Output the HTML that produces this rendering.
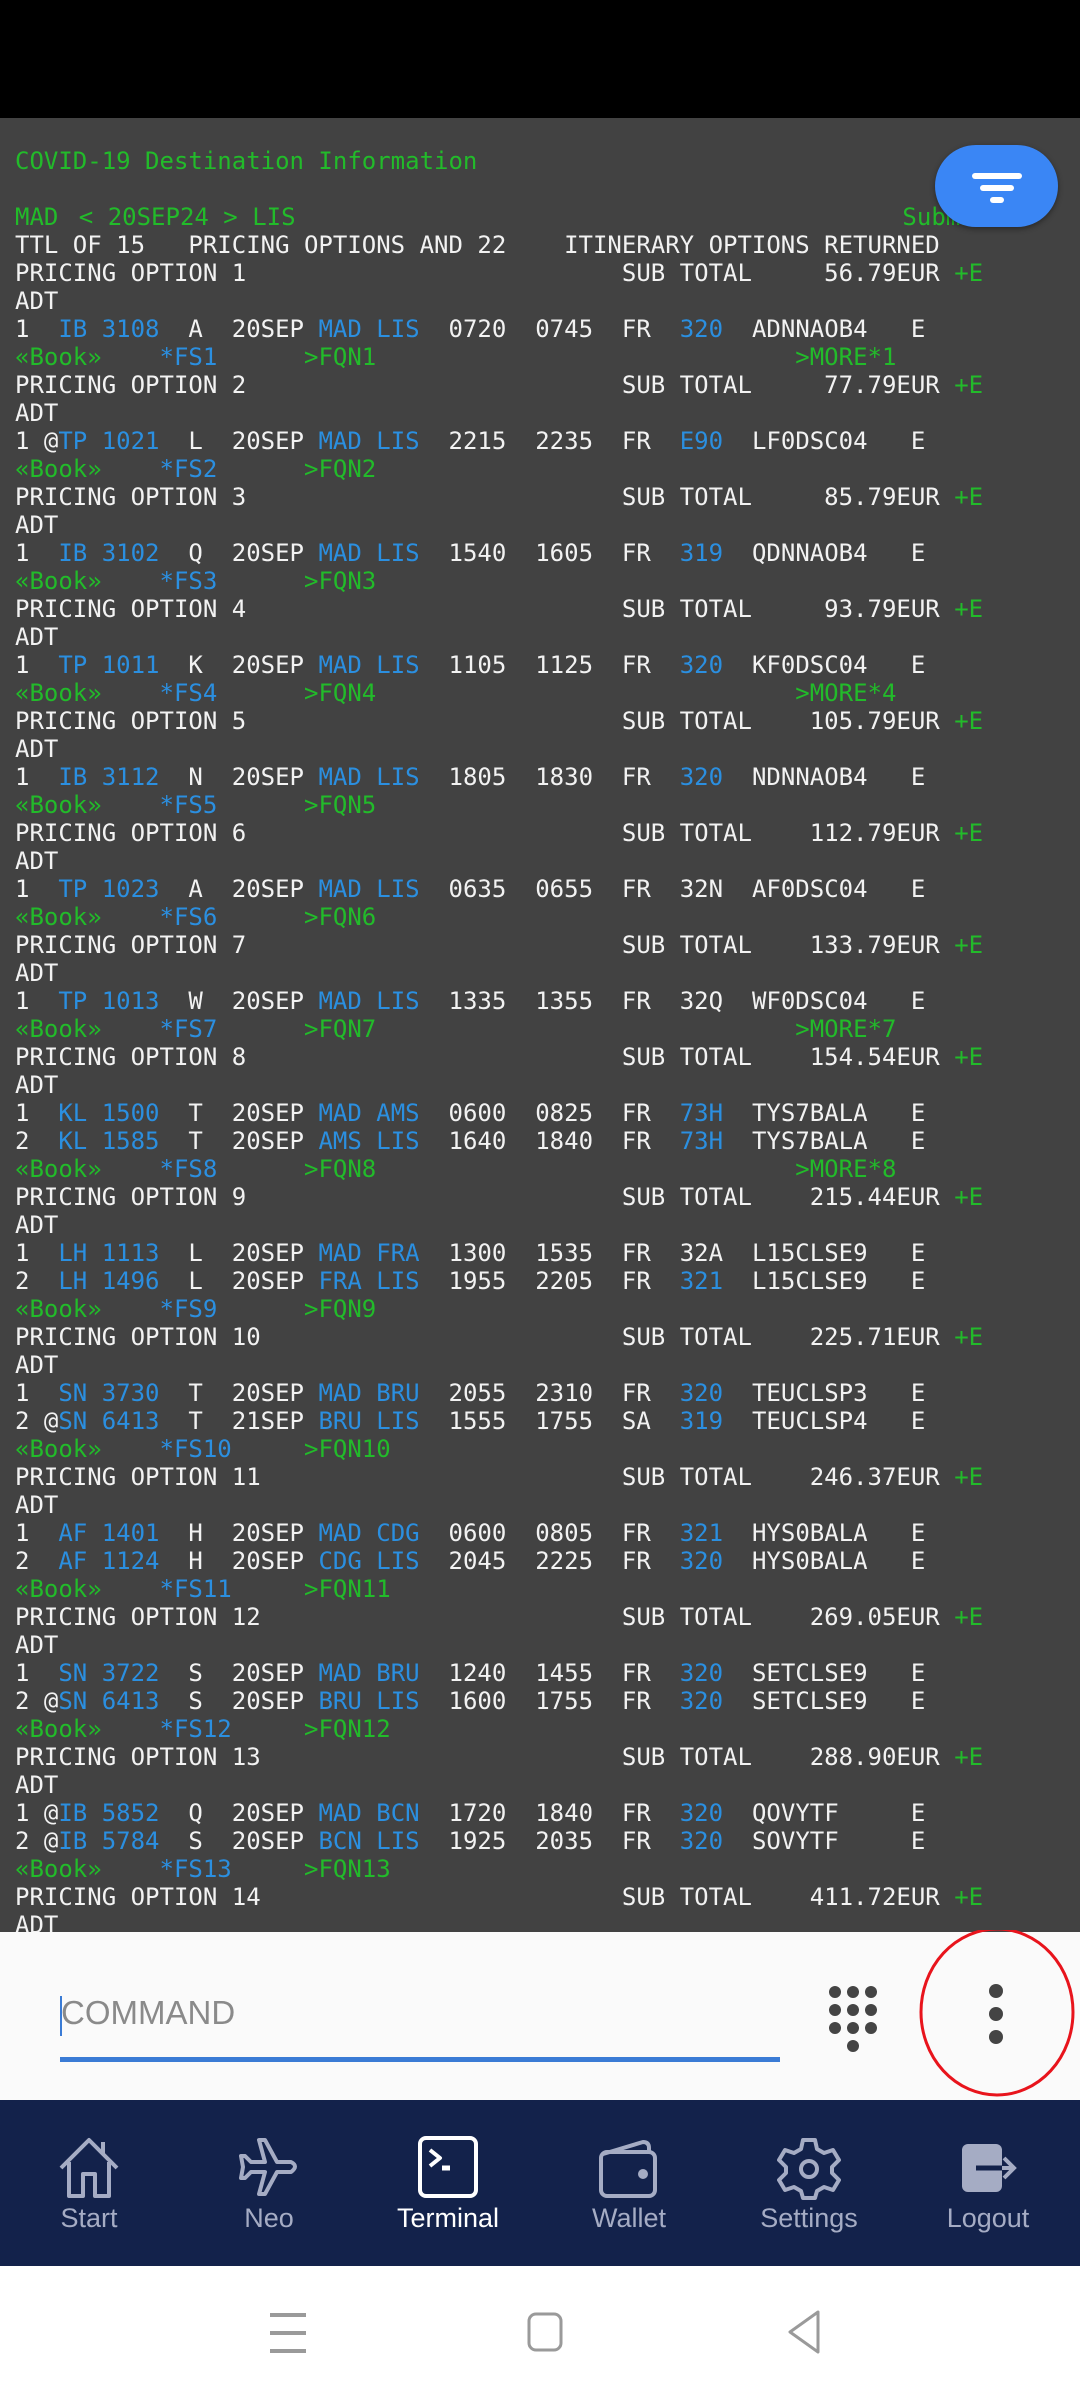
<!DOCTYPE html>
<html><head><meta charset="utf-8">
<style>
*{margin:0;padding:0;box-sizing:border-box}
html,body{width:1080px;height:2400px;overflow:hidden;background:#fff}
#status{position:absolute;left:0;top:0;width:1080px;height:118px;background:#000}
#term{position:absolute;left:0;top:118px;width:1080px;height:1814px;background:#424242;overflow:hidden}
pre{position:absolute;left:15px;top:29px;font-family:"DejaVu Sans Mono","Liberation Mono",monospace;font-size:24px;line-height:28px;color:#f2f2f2;white-space:pre}
.g{color:#22bb2a}.b{color:#2b8fe0}
#fab{position:absolute;left:935px;top:145px;width:123px;height:82px;border-radius:41px;background:#3a86f5;box-shadow:0 2px 6px rgba(0,0,0,.4)}
#fab i{position:absolute;height:6px;border-radius:3px;background:#fff;left:50%;transform:translateX(-50%)}
#inp{position:absolute;left:0;top:1932px;width:1080px;height:168px;background:#fafafa}
#nav{position:absolute;left:0;top:2100px;width:1080px;height:166px;background:#13224b}
.it{position:absolute;top:0;width:180px;height:166px;text-align:center}
.it svg{position:absolute;left:58px;top:36px}
.it span{position:absolute;left:0;width:180px;top:103px;font-family:"Liberation Sans",sans-serif;font-size:27px;color:#a5acc4}
#sys{position:absolute;left:0;top:2266px;width:1080px;height:134px;background:#fff}
</style></head><body>
<div id="status"></div>
<div id="term">
<pre><span class="g">COVID-19 Destination Information</span>

<span class="g">MAD <span style="margin-left:6px">&lt; 20SEP24 &gt; LIS</span>                                          Submit</span>
TTL OF 15   PRICING OPTIONS AND 22    ITINERARY OPTIONS RETURNED
PRICING OPTION 1                          SUB TOTAL     56.79EUR <span class="g">+E</span>
ADT
1  <span class="b">IB 3108</span>  A  20SEP <span class="b">MAD LIS</span>  0720  0745  FR  <span class="b">320</span>  ADNNAOB4   E
<span class="g">«Book»</span>    <span class="b">*FS1</span>      <span class="g">&gt;FQN1                             &gt;MORE*1</span>
PRICING OPTION 2                          SUB TOTAL     77.79EUR <span class="g">+E</span>
ADT
1 @<span class="b">TP 1021</span>  L  20SEP <span class="b">MAD LIS</span>  2215  2235  FR  <span class="b">E90</span>  LF0DSC04   E
<span class="g">«Book»</span>    <span class="b">*FS2</span>      <span class="g">&gt;FQN2</span>
PRICING OPTION 3                          SUB TOTAL     85.79EUR <span class="g">+E</span>
ADT
1  <span class="b">IB 3102</span>  Q  20SEP <span class="b">MAD LIS</span>  1540  1605  FR  <span class="b">319</span>  QDNNAOB4   E
<span class="g">«Book»</span>    <span class="b">*FS3</span>      <span class="g">&gt;FQN3</span>
PRICING OPTION 4                          SUB TOTAL     93.79EUR <span class="g">+E</span>
ADT
1  <span class="b">TP 1011</span>  K  20SEP <span class="b">MAD LIS</span>  1105  1125  FR  <span class="b">320</span>  KF0DSC04   E
<span class="g">«Book»</span>    <span class="b">*FS4</span>      <span class="g">&gt;FQN4                             &gt;MORE*4</span>
PRICING OPTION 5                          SUB TOTAL    105.79EUR <span class="g">+E</span>
ADT
1  <span class="b">IB 3112</span>  N  20SEP <span class="b">MAD LIS</span>  1805  1830  FR  <span class="b">320</span>  NDNNAOB4   E
<span class="g">«Book»</span>    <span class="b">*FS5</span>      <span class="g">&gt;FQN5</span>
PRICING OPTION 6                          SUB TOTAL    112.79EUR <span class="g">+E</span>
ADT
1  <span class="b">TP 1023</span>  A  20SEP <span class="b">MAD LIS</span>  0635  0655  FR  32N  AF0DSC04   E
<span class="g">«Book»</span>    <span class="b">*FS6</span>      <span class="g">&gt;FQN6</span>
PRICING OPTION 7                          SUB TOTAL    133.79EUR <span class="g">+E</span>
ADT
1  <span class="b">TP 1013</span>  W  20SEP <span class="b">MAD LIS</span>  1335  1355  FR  32Q  WF0DSC04   E
<span class="g">«Book»</span>    <span class="b">*FS7</span>      <span class="g">&gt;FQN7                             &gt;MORE*7</span>
PRICING OPTION 8                          SUB TOTAL    154.54EUR <span class="g">+E</span>
ADT
1  <span class="b">KL 1500</span>  T  20SEP <span class="b">MAD AMS</span>  0600  0825  FR  <span class="b">73H</span>  TYS7BALA   E
2  <span class="b">KL 1585</span>  T  20SEP <span class="b">AMS LIS</span>  1640  1840  FR  <span class="b">73H</span>  TYS7BALA   E
<span class="g">«Book»</span>    <span class="b">*FS8</span>      <span class="g">&gt;FQN8                             &gt;MORE*8</span>
PRICING OPTION 9                          SUB TOTAL    215.44EUR <span class="g">+E</span>
ADT
1  <span class="b">LH 1113</span>  L  20SEP <span class="b">MAD FRA</span>  1300  1535  FR  32A  L15CLSE9   E
2  <span class="b">LH 1496</span>  L  20SEP <span class="b">FRA LIS</span>  1955  2205  FR  <span class="b">321</span>  L15CLSE9   E
<span class="g">«Book»</span>    <span class="b">*FS9</span>      <span class="g">&gt;FQN9</span>
PRICING OPTION 10                         SUB TOTAL    225.71EUR <span class="g">+E</span>
ADT
1  <span class="b">SN 3730</span>  T  20SEP <span class="b">MAD BRU</span>  2055  2310  FR  <span class="b">320</span>  TEUCLSP3   E
2 @<span class="b">SN 6413</span>  T  21SEP <span class="b">BRU LIS</span>  1555  1755  SA  <span class="b">319</span>  TEUCLSP4   E
<span class="g">«Book»</span>    <span class="b">*FS10</span>     <span class="g">&gt;FQN10</span>
PRICING OPTION 11                         SUB TOTAL    246.37EUR <span class="g">+E</span>
ADT
1  <span class="b">AF 1401</span>  H  20SEP <span class="b">MAD CDG</span>  0600  0805  FR  <span class="b">321</span>  HYS0BALA   E
2  <span class="b">AF 1124</span>  H  20SEP <span class="b">CDG LIS</span>  2045  2225  FR  <span class="b">320</span>  HYS0BALA   E
<span class="g">«Book»</span>    <span class="b">*FS11</span>     <span class="g">&gt;FQN11</span>
PRICING OPTION 12                         SUB TOTAL    269.05EUR <span class="g">+E</span>
ADT
1  <span class="b">SN 3722</span>  S  20SEP <span class="b">MAD BRU</span>  1240  1455  FR  <span class="b">320</span>  SETCLSE9   E
2 @<span class="b">SN 6413</span>  S  20SEP <span class="b">BRU LIS</span>  1600  1755  FR  <span class="b">320</span>  SETCLSE9   E
<span class="g">«Book»</span>    <span class="b">*FS12</span>     <span class="g">&gt;FQN12</span>
PRICING OPTION 13                         SUB TOTAL    288.90EUR <span class="g">+E</span>
ADT
1 @<span class="b">IB 5852</span>  Q  20SEP <span class="b">MAD BCN</span>  1720  1840  FR  <span class="b">320</span>  QOVYTF     E
2 @<span class="b">IB 5784</span>  S  20SEP <span class="b">BCN LIS</span>  1925  2035  FR  <span class="b">320</span>  SOVYTF     E
<span class="g">«Book»</span>    <span class="b">*FS13</span>     <span class="g">&gt;FQN13</span>
PRICING OPTION 14                         SUB TOTAL    411.72EUR <span class="g">+E</span>
ADT</pre>
</div>
<div id="fab"><i style="top:28px;width:50px"></i><i style="top:40px;width:34px"></i><i style="top:52px;width:14px"></i></div>

<div id="inp">
  <div style="position:absolute;left:60px;top:64px;width:2px;height:40px;background:#3a7bd5"></div>
  <div style="position:absolute;left:61px;top:62px;font-family:'Liberation Sans',sans-serif;font-size:33px;color:#8a8a8a">COMMAND</div>
  <div style="position:absolute;left:60px;top:125px;width:720px;height:5px;background:#3a7bd5"></div>
  <svg style="position:absolute;left:825px;top:50px" width="56" height="70" viewBox="0 0 56 70" fill="#444">
    <circle cx="10" cy="10" r="6"/><circle cx="28" cy="10" r="6"/><circle cx="46" cy="10" r="6"/>
    <circle cx="10" cy="28" r="6"/><circle cx="28" cy="28" r="6"/><circle cx="46" cy="28" r="6"/>
    <circle cx="10" cy="46" r="6"/><circle cx="28" cy="46" r="6"/><circle cx="46" cy="46" r="6"/>
    <circle cx="28" cy="64" r="6"/>
  </svg>
  <svg style="position:absolute;left:915px;top:-2px" width="170" height="175" viewBox="0 0 170 175">
    <circle cx="81" cy="61" r="7" fill="#444"/><circle cx="81" cy="84" r="7" fill="#444"/><circle cx="81" cy="107" r="7" fill="#444"/>
    <ellipse cx="82" cy="82" rx="76" ry="83" fill="none" stroke="#e8141c" stroke-width="3"/>
  </svg>
</div>

<div id="nav">
  <div class="it" style="left:-1px">
    <svg width="64" height="64" viewBox="0 0 64 64" fill="none" stroke="#a5acc4" stroke-width="4" stroke-linejoin="round">
      <path d="M4 32 L32 4 L60 32 M46 18 V6 M12 26 V60 H26 V38 H38 V60 H52 V26"/>
    </svg><span>Start</span></div>
  <div class="it" style="left:179px">
    <svg width="64" height="64" viewBox="0 0 64 64" fill="none" stroke="#a5acc4" stroke-width="4" stroke-linejoin="round">
      <path d="M22 4 L28 4 L40 26 L54 26 Q62 30 54 36 L40 36 L28 58 L22 58 L28 36 L14 36 L8 42 L4 42 L6 31 L4 20 L8 20 L14 26 L28 26 Z"/>
    </svg><span>Neo</span></div>
  <div class="it" style="left:358px">
    <svg width="64" height="64" viewBox="0 0 64 64" fill="none" stroke="#fff" stroke-width="4" stroke-linejoin="round">
      <rect x="4" y="2" width="56" height="58" rx="6"/><path d="M14 14 L24 22 L14 30"/><path d="M26 32 H34" stroke-width="5"/>
    </svg><span style="color:#fff">Terminal</span></div>
  <div class="it" style="left:539px">
    <svg width="64" height="64" viewBox="0 0 64 64" fill="none" stroke="#a5acc4" stroke-width="4" stroke-linejoin="round">
      <path d="M6 18 L46 6 Q52 6 52 12 V16"/><rect x="4" y="16" width="54" height="44" rx="6"/><circle cx="46" cy="38" r="3" fill="#a5acc4"/>
    </svg><span>Wallet</span></div>
  <div class="it" style="left:719px">
    <svg width="64" height="64" viewBox="0 0 64 64" fill="none" stroke="#a5acc4" stroke-width="4" stroke-linejoin="round">
      <path d="M26 4 H38 L40 13 L47 17 L56 14 L62 24 L55 31 V37 L62 44 L56 54 L47 51 L40 55 L38 62 H26 L24 55 L17 51 L8 54 L2 44 L9 37 V31 L2 24 L8 14 L17 17 L24 13 Z"/><circle cx="32" cy="33" r="8"/>
    </svg><span>Settings</span></div>
  <div class="it" style="left:898px">
    <svg width="64" height="64" viewBox="0 0 64 64">
      <rect x="6" y="8" width="40" height="48" rx="6" fill="#a5acc4"/>
      <path d="M20 32 H58 M48 22 L58 32 L48 42" fill="none" stroke="#13224b" stroke-width="5"/>
      <path d="M46 32 H58 M48 22 L58 32 L48 42" fill="none" stroke="#a5acc4" stroke-width="4"/>
    </svg><span>Logout</span></div>
</div>

<div id="sys">
  <svg style="position:absolute;left:268px;top:46px" width="40" height="42" viewBox="0 0 40 42" stroke="#9a9a9a" stroke-width="4"><path d="M2 3 H38 M2 21 H38 M2 39 H38"/></svg>
  <svg style="position:absolute;left:527px;top:46px" width="36" height="40" viewBox="0 0 36 40"><rect x="2" y="2" width="32" height="36" rx="7" fill="none" stroke="#9a9a9a" stroke-width="3"/></svg>
  <svg style="position:absolute;left:786px;top:44px" width="36" height="44" viewBox="0 0 36 44"><path d="M32 2 L4 22 L32 42 Z" fill="none" stroke="#9a9a9a" stroke-width="3" stroke-linejoin="round"/></svg>
</div>
</body></html>
